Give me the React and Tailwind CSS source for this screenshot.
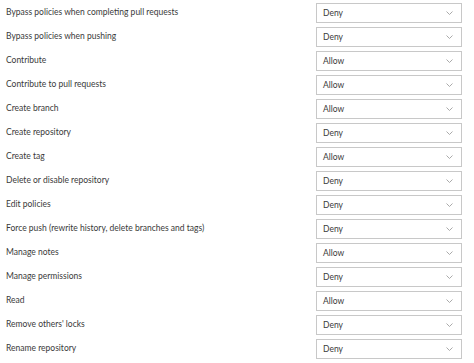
import React from "react";

const rows = [
  ["Bypass policies when completing pull requests", "Deny"],
  ["Bypass policies when pushing", "Deny"],
  ["Contribute", "Allow"],
  ["Contribute to pull requests", "Allow"],
  ["Create branch", "Allow"],
  ["Create repository", "Deny"],
  ["Create tag", "Allow"],
  ["Delete or disable repository", "Deny"],
  ["Edit policies", "Deny"],
  ["Force push (rewrite history, delete branches and tags)", "Deny"],
  ["Manage notes", "Allow"],
  ["Manage permissions", "Deny"],
  ["Read", "Allow"],
  ["Remove others' locks", "Deny"],
  ["Rename repository", "Deny"],
];

function Chevron() {
  return (
    <svg width="7" height="4" viewBox="0 0 7 4" fill="none">
      <path d="M0.5 0.5 L3.5 3.5 L6.5 0.5" stroke="#a0a0a0" strokeWidth="0.9" />
    </svg>
  );
}

export default function App() {
  return (
    <div
      className="w-[474px] h-[363px] bg-white pt-[1px] overflow-hidden text-[#3a3a3a]"
      style={{ fontFamily: "Lato, 'Noto Sans', sans-serif" }}
    >
      {rows.map(([label, value]) => (
        <div key={label} className="h-6 flex items-center pl-[6px]">
          <div className="w-[310px] text-[8.5px] leading-none whitespace-nowrap pb-[2px]">{label}</div>
          <div className="w-[146px] h-[20px] border border-[#c8c8c8] flex items-center justify-between pl-[6px] pr-[8px]">
            <span className="text-[8.5px] leading-none">{value}</span>
            <Chevron />
          </div>
        </div>
      ))}
    </div>
  );
}
